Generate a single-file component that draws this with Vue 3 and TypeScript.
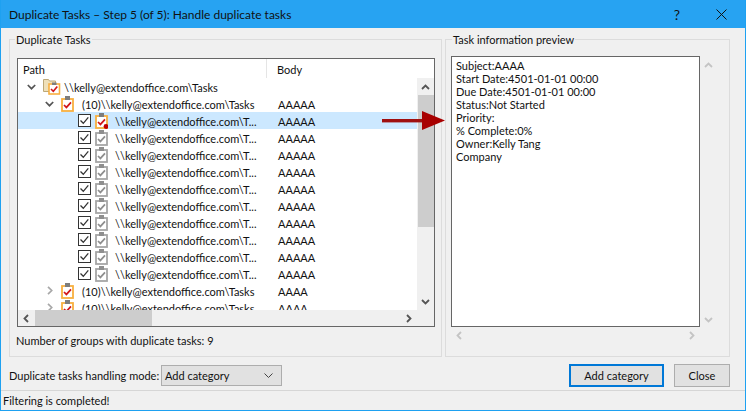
<script setup lang="ts">
interface Row {
  lvl: number
  kind: 'root' | 'group' | 'item' | 'collapsed'
  text: string
  body: string
  sel?: boolean
}
const long = '\\\\kelly@extendoffice.com\\T...'
const group = '(10)\\\\kelly@extendoffice.com\\Tasks'
const rows: Row[] = [
  { lvl: 0, kind: 'root', text: '\\\\kelly@extendoffice.com\\Tasks', body: '' },
  { lvl: 1, kind: 'group', text: group, body: 'AAAAA' },
  { lvl: 2, kind: 'item', text: long, body: 'AAAAA', sel: true },
  ...Array.from({ length: 9 }, (): Row => ({ lvl: 2, kind: 'item', text: long, body: 'AAAAA' })),
  { lvl: 1, kind: 'collapsed', text: group, body: 'AAAA' },
  { lvl: 1, kind: 'collapsed', text: group, body: 'AAAA' },
]
const info = [
  'Subject:AAAA',
  'Start Date:4501-01-01 00:00',
  'Due Date:4501-01-01 00:00',
  'Status:Not Started',
  'Priority:',
  '% Complete:0%',
  'Owner:Kelly Tang',
  'Company',
]
</script>

<template>
  <div class="dialog">
    <header class="titlebar">
      <span class="title">Duplicate Tasks – Step 5 (of 5): Handle duplicate tasks</span>
      <span class="help">?</span>
      <svg class="close-x" width="11" height="11" viewBox="0 0 11 11"><path d="M.5.5l10 10M10.5.5l-10 10" stroke="#111" fill="none" /></svg>
    </header>

    <main class="content">
      <div class="groups">
        <fieldset class="box left">
          <legend>Duplicate Tasks</legend>
          <div class="tree">
            <div class="tree-head">
              <span class="col-path">Path</span>
              <span class="col-body">Body</span>
            </div>
            <div class="tree-mid">
              <div class="tree-rows">
                <div v-for="(r, i) in rows" :key="i" class="row" :class="[`lvl${r.lvl}`, { sel: r.sel }]">
                  <div class="cell-path">
                    <svg v-if="r.kind === 'root' || r.kind === 'group'" class="chev" width="9" height="6" viewBox="0 0 9 6"><path d="M.8 1l3.7 3.7L8.2 1" stroke="#555" stroke-width="1.7" fill="none" /></svg>
                    <svg v-if="r.kind === 'collapsed'" class="chev side" width="6" height="9" viewBox="0 0 6 9"><path d="M1 .8l3.7 3.7L1 8.2" stroke="#a8a8a8" stroke-width="1.7" fill="none" /></svg>
                    <svg v-if="r.kind === 'root'" class="folder" width="18" height="17" viewBox="0 0 18 17">
                      <path d="M.5 1.5h5l1 1.5h6v10.5H.5z" fill="#efe0b9" stroke="#bda878" />
                      <rect x="6" y="6" width="10.5" height="10" fill="#fff" stroke="#f8b040" stroke-width="1.6" />
                      <rect x="9" y="4.5" width="4.5" height="2.5" fill="#7d7d7d" />
                      <path d="M8 11l2.3 2.3 4-4.8" stroke="#d0161b" stroke-width="1.6" fill="none" />
                    </svg>
                    <label v-if="r.kind === 'item'" class="check">
                      <svg width="11" height="11" viewBox="0 0 11 11"><path d="M1.5 5.5l2.8 2.8 5-6" stroke="#333" stroke-width="1.3" fill="none" /></svg>
                    </label>
                    <svg v-if="r.kind !== 'root'" class="task" :class="{ grey: r.kind === 'item' && !r.sel }" width="13" height="16" viewBox="0 0 13 16">
                      <rect class="frame" x="1" y="3" width="11" height="12" fill="#fff" stroke-width="1.8" />
                      <rect class="clip" x="4" y="0" width="5" height="4" />
                      <path class="tick" d="M3 9l2.4 2.4 4.6-5" stroke-width="1.7" fill="none" />
                      <circle v-if="r.sel" cx="11" cy="13.5" r="2.4" fill="#c00000" />
                    </svg>
                    <span class="path-text">{{ r.text }}</span>
                  </div>
                  <span class="cell-body">{{ r.body }}</span>
                </div>
              </div>
              <div class="vscroll">
                <svg width="9" height="6" viewBox="0 0 9 6" class="arr"><path d="M1 5l3.5-3.5L8 5" stroke="#555" stroke-width="1.8" fill="none" /></svg>
                <div class="vthumb"></div>
                <svg width="9" height="6" viewBox="0 0 9 6" class="arr last"><path d="M1 1l3.5 3.5L8 1" stroke="#555" stroke-width="1.8" fill="none" /></svg>
              </div>
            </div>
            <div class="hscroll">
              <svg width="6" height="9" viewBox="0 0 6 9"><path d="M5 1L1.5 4.5 5 8" stroke="#555" stroke-width="1.8" fill="none" /></svg>
              <div class="hthumb"></div>
              <svg class="last-h" width="6" height="9" viewBox="0 0 6 9"><path d="M1 1l3.5 3.5L1 8" stroke="#555" stroke-width="1.8" fill="none" /></svg>
            </div>
          </div>
          <p class="count">Number of groups with duplicate tasks: 9</p>
        </fieldset>

        <fieldset class="box right">
          <legend>Task information preview</legend>
          <div class="preview-wrap">
            <div class="preview">
              <div v-for="l in info" :key="l" class="line">{{ l }}</div>
            </div>
            <div class="pv-scroll">
              <svg width="9" height="6" viewBox="0 0 9 6"><path d="M1 5l3.5-3.5L8 5" stroke="#c4c4c4" stroke-width="1.8" fill="none" /></svg>
              <svg width="9" height="6" viewBox="0 0 9 6"><path d="M1 1l3.5 3.5L8 1" stroke="#c4c4c4" stroke-width="1.8" fill="none" /></svg>
            </div>
          </div>
          <div class="ph-scroll">
            <svg width="6" height="9" viewBox="0 0 6 9"><path d="M5 1L1.5 4.5 5 8" stroke="#c4c4c4" stroke-width="1.8" fill="none" /></svg>
            <svg width="6" height="9" viewBox="0 0 6 9"><path d="M1 1l3.5 3.5L1 8" stroke="#c4c4c4" stroke-width="1.8" fill="none" /></svg>
          </div>
        </fieldset>
      </div>

      <div class="actions">
        <span class="mode-label">Duplicate tasks handling mode:</span>
        <div class="select">
          <span>Add category</span>
          <svg width="9" height="5" viewBox="0 0 9 5"><path d="M.5.5l4 4 4-4" stroke="#444" fill="none" /></svg>
        </div>
        <button class="btn primary">Add category</button>
        <button class="btn">Close</button>
      </div>
    </main>

    <footer class="status">Filtering is completed!</footer>

    <svg class="arrow" width="64" height="20" viewBox="0 0 64 20">
      <rect x="0" y="8" width="40" height="3.4" fill="#a01010" />
      <path d="M40 0l23 9.5L40 19z" fill="#a80000" />
    </svg>
  </div>
</template>

<style>
body { margin: 0; }
</style>

<style scoped>
.dialog {
  position: relative;
  width: 746px;
  height: 411px;
  box-sizing: border-box;
  display: flex;
  flex-direction: column;
  background: #f0f0f0;
  border: 1px solid #1ea1f1;
  border-top: 0;
  font: 11px Lato, "Open Sans", sans-serif;
  color: #111;
  overflow: hidden;
}
.titlebar {
  height: 28px;
  margin: 0 -1px;
  padding: 0 19px 0 9px;
  background: #27a3f2;
  display: flex;
  align-items: center;
  flex: none;
}
.title { font-size: 12px; flex: 1; white-space: nowrap; }
.help { font-size: 14px; margin-right: 36px; }
.content { flex: 1; display: flex; flex-direction: column; padding: 4px 15px 0 8px; min-height: 0; }
.groups { display: flex; gap: 3px; height: 325px; flex: none; }
fieldset.box {
  margin: 0;
  padding: 0;
  box-sizing: border-box;
  border: 1px solid #dcdcdc;
  min-width: 0;
  height: 325px;
}
fieldset.left { width: 433px; padding: 11px 6px 0 7px; }
fieldset.right { width: 285px; padding: 9px 0 0 5px; }
legend { padding: 0 1px; line-height: 15px; height: 15px; white-space: nowrap; }
fieldset.left legend { margin-left: -2px; }
fieldset.right legend { margin-left: 1px; }
.tree {
  box-sizing: border-box;
  width: 418px;
  height: 269px;
  border: 1px solid #666;
  background: #fff;
  display: flex;
  flex-direction: column;
}
.tree-head { height: 19px; display: flex; align-items: center; flex: none; }
.col-path { width: 249px; padding-left: 5px; box-sizing: border-box; border-right: 1px solid #e5e5e5; height: 19px; line-height: 22px; }
.col-body { padding-left: 10px; height: 19px; line-height: 22px; }
.tree-mid { flex: 1; display: flex; min-height: 0; }
.tree-rows { flex: 1; overflow: hidden; }
.row { height: 17px; display: flex; align-items: center; white-space: nowrap; }
.row.sel { background: #cce8ff; }
.cell-path { width: 260px; flex: none; display: flex; align-items: center; box-sizing: border-box; overflow: hidden; }
.path-text, .cell-body { padding-top: 2px; }
.lvl0 .cell-path { padding-left: 9px; }
.lvl1 .cell-path { padding-left: 27px; }
.lvl2 .cell-path { padding-left: 60px; }
.chev { flex: none; width: 9px; margin-right: 7px; }
.chev.side { width: 6px; margin-left: 2px; margin-right: 8px; }
.folder { flex: none; margin-right: 3px; }
.check {
  flex: none;
  box-sizing: border-box;
  width: 13px;
  height: 13px;
  border: 1px solid #333;
  background: #fff;
  margin-right: 4px;
  display: flex;
  align-items: center;
  justify-content: center;
}
.check svg { flex: none; }
.task { flex: none; margin-right: 7px; }
.task .frame { stroke: #f8b040; }
.task .clip { fill: #7d7d7d; }
.task .tick { stroke: #d0161b; }
.task.grey .frame { stroke: #a6a6a6; }
.task.grey .clip { fill: #8f8f8f; }
.task.grey .tick { stroke: #8e8e8e; }
.lvl1 .task { margin-right: 8px; }
.cell-body { flex: none; }
.vscroll {
  width: 17px;
  flex: none;
  background: #f0f0f0;
  display: flex;
  flex-direction: column;
  align-items: center;
  padding-top: 6px;
  box-sizing: border-box;
}
.vthumb { width: 16px; height: 132px; margin-top: 5px; background: #cdcdcd; }
.arr.last { margin-top: auto; margin-bottom: 5px; }
.hscroll {
  height: 16px;
  flex: none;
  background: #f0f0f0;
  display: flex;
  align-items: center;
  padding-left: 5px;
}
.hthumb { width: 117px; height: 16px; margin-left: 6px; background: #cdcdcd; }
.last-h { margin-left: auto; margin-right: 22px; }
.count { margin: 6px 0 0 -1px; line-height: 16px; }
.preview-wrap { display: flex; height: 271px; }
.preview {
  box-sizing: border-box;
  width: 249px;
  height: 271px;
  background: #fff;
  border: 1px solid #666;
  padding: 2px 4px;
}
.line { line-height: 13px; white-space: nowrap; }
.pv-scroll {
  width: 17px;
  display: flex;
  flex-direction: column;
  justify-content: space-between;
  align-items: center;
  padding: 6px 0 4px;
  box-sizing: border-box;
}
.ph-scroll {
  width: 249px;
  height: 17px;
  box-sizing: border-box;
  padding: 0 5px;
  display: flex;
  justify-content: space-between;
  align-items: center;
}
.actions { display: flex; align-items: center; height: 24px; margin-top: 6px; flex: none; }
.mode-label { width: 152px; flex: none; white-space: nowrap; }
.select {
  box-sizing: border-box;
  width: 121px;
  height: 21px;
  background: #e1e1e1;
  border: 1px solid #adadad;
  display: flex;
  align-items: center;
  justify-content: space-between;
  padding: 0 8px 0 3px;
}
.btn {
  box-sizing: border-box;
  height: 23px;
  background: #e1e1e1;
  border: 1px solid #adadad;
  font: inherit;
  color: inherit;
  padding: 0;
  width: 56px;
  margin-left: 10px;
}
.btn.primary { width: 95px; margin-left: auto; border: 2px solid #0078d7; }
.status {
  flex: none;
  height: 19px;
  margin-top: 4px;
  border-top: 1px solid #d6d6d6;
  padding-left: 2px;
  line-height: 20px;
}
.arrow { position: absolute; left: 381px; top: 111px; }
</style>
